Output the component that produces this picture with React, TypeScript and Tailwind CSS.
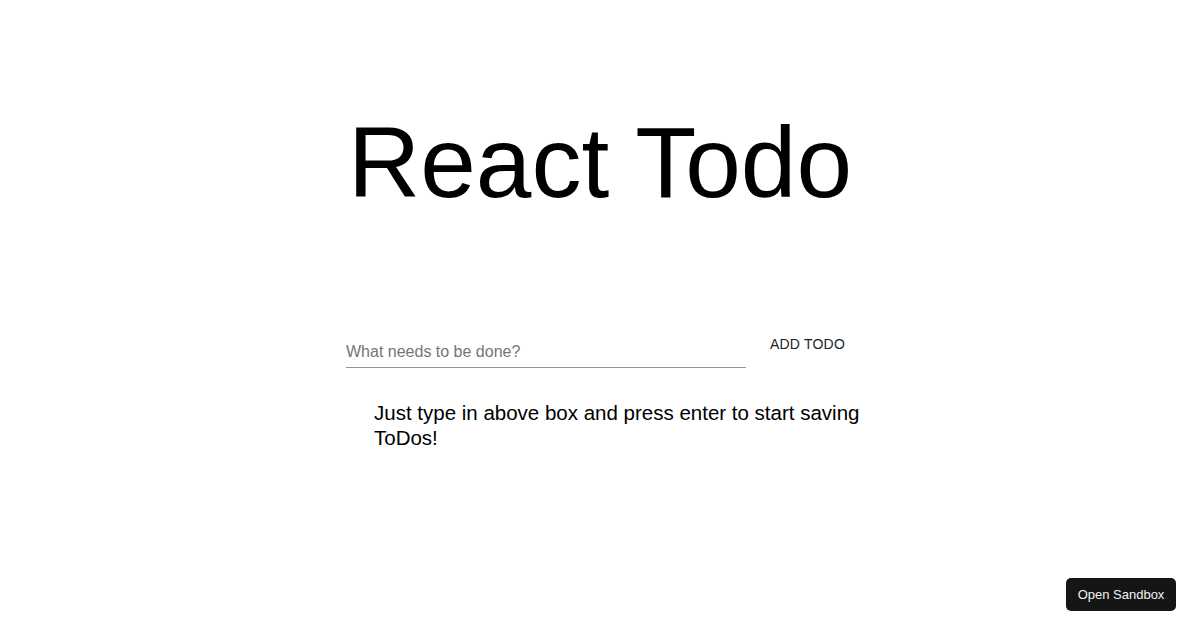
import { useState } from "react";

export default function App() {
  const [text, setText] = useState("");
  const [todos, setTodos] = useState<string[]>([]);

  const addTodo = () => {
    if (!text.trim()) return;
    setTodos((t) => [...t, text.trim()]);
    setText("");
  };

  return (
    <div className="relative min-h-[630px] w-full bg-white font-['Liberation_Sans',Arial,sans-serif] text-black">
      <h1 className="pt-[112px] text-center text-[100px] leading-[100px] font-normal">
        React Todo
      </h1>

      <div className="mx-auto mt-[114px] w-[508px]">
        <div className="flex items-start">
          <input
            value={text}
            onChange={(e) => setText(e.target.value)}
            onKeyDown={(e) => e.key === "Enter" && addTodo()}
            placeholder="What needs to be done?"
            className="mt-[10px] box-border h-[32px] w-[400px] border-b border-[#949494] bg-transparent pt-[5px] pb-[4px] text-[16px] leading-[23px] text-black outline-none placeholder:text-[#757575]"
          />
          <button
            onClick={addTodo}
            className="ml-[16px] px-[8px] py-[6px] text-[14px] leading-[24.5px] tracking-[0.2px] text-[#1f1f1f] uppercase"
          >
            Add Todo
          </button>
        </div>

        <div className="mt-[32px] pl-[28px] w-[540px] text-[20.5px] leading-[25px]">
          {todos.length === 0 ? (
            <p>Just type in above box and press enter to start saving ToDos!</p>
          ) : (
            <ul>
              {todos.map((t, i) => (
                <li key={i}>{t}</li>
              ))}
            </ul>
          )}
        </div>
      </div>

      <button className="absolute right-[24px] bottom-[19px] h-[33px] w-[110px] rounded-[5px] bg-[#151515] text-[13px] text-[#f2f2f2]">
        Open Sandbox
      </button>
    </div>
  );
}
